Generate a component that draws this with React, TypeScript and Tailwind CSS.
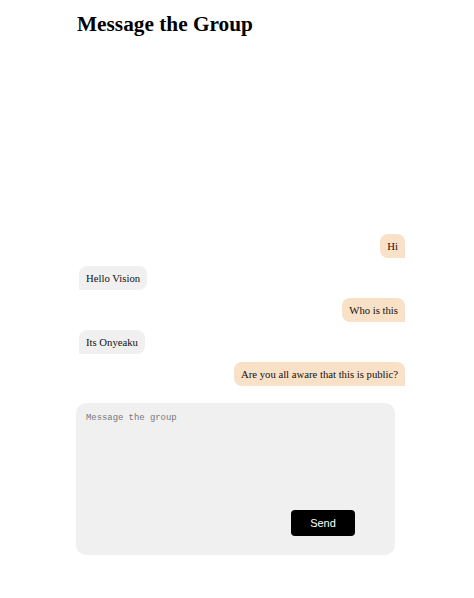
const messages = [
  { id: 1, text: "Hi", mine: true },
  { id: 2, text: "Hello Vision", mine: false },
  { id: 3, text: "Who is this", mine: true },
  { id: 4, text: "Its Onyeaku", mine: false },
  { id: 5, text: "Are you all aware that this is public?", mine: true },
];

const Bubble = ({ text, mine }: { text: string; mine: boolean }) => (
  <div
    className={
      mine
        ? "self-end rounded-lg rounded-br-none bg-[#f9e1c8] px-[7px] py-[6px] text-[10.7px] leading-[12px] text-[#111]"
        : "ml-[3px] self-start rounded-lg rounded-bl-none bg-[#f0f0f0] px-[7px] py-[6px] text-[10.7px] leading-[12px] text-[#111]"
    }
  >
    {text}
  </div>
);

export default function App() {
  return (
    <div className="min-h-screen bg-white font-['Liberation_Serif',serif]">
      <div className="ml-[76px] w-[329px] pt-[14px]">
        <h1 className="ml-[1px] text-[21.3px] font-bold leading-[21px] text-black">
          Message the Group
        </h1>

        <div className="flex h-[351px] flex-col justify-end gap-2">
          {messages.map((m) => (
            <Bubble key={m.id} text={m.text} mine={m.mine} />
          ))}
        </div>

        <div className="mt-[17px] flex h-[152px] w-[319px] flex-col rounded-[10px] bg-[#f0f0f0] p-[10px]">
          <textarea
            placeholder="Message the group"
            className="flex-1 resize-none bg-transparent font-['Liberation_Mono',monospace] text-[8.9px] leading-[10px] text-[#222] outline-none placeholder:text-[#777]"
          />
          <button className="mr-[30px] mb-[9px] h-[26px] w-[64px] self-end rounded-[4px] bg-black font-['Liberation_Sans',sans-serif] text-[11px] text-white">
            Send
          </button>
        </div>
      </div>
    </div>
  );
}
